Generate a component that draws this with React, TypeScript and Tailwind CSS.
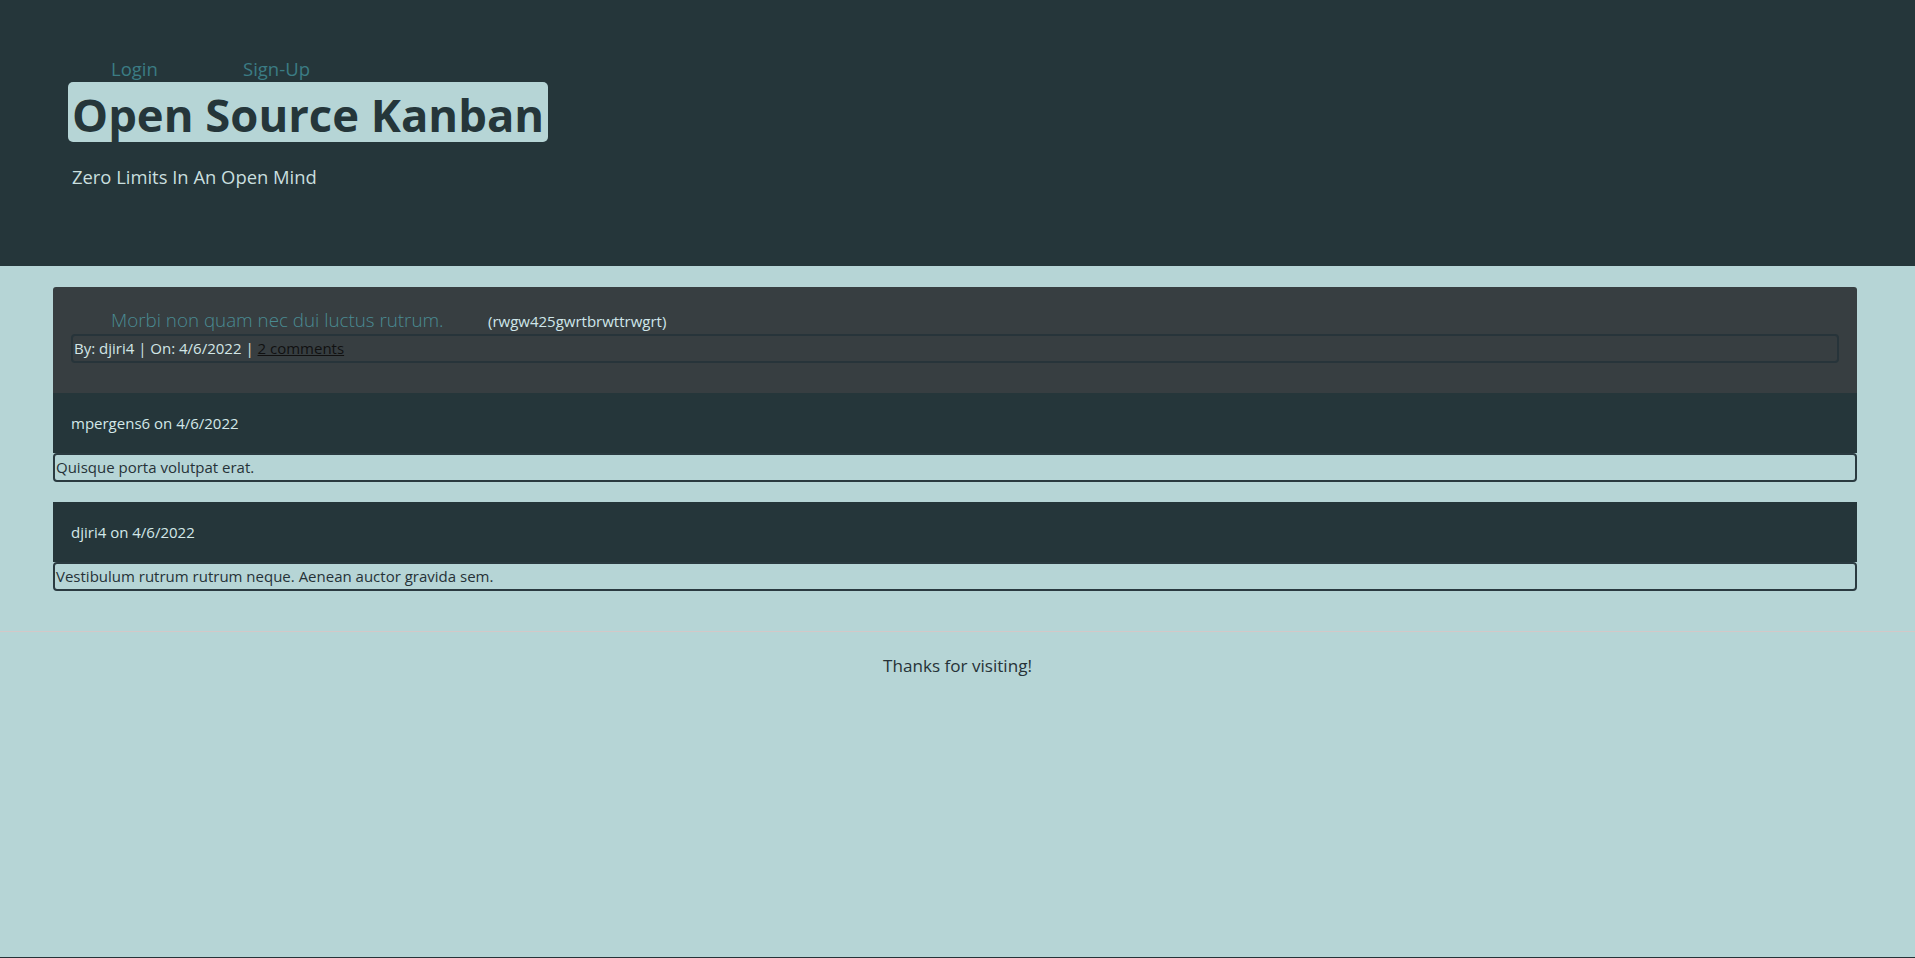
export default function App() {
  const comments = [
    { author: "mpergens6", date: "4/6/2022", body: "Quisque porta volutpat erat." },
    { author: "djiri4", date: "4/6/2022", body: "Vestibulum rutrum rutrum neque. Aenean auctor gravida sem." },
  ];

  return (
    <div className="min-h-screen flex flex-col bg-[#b6d5d6] border-b border-[#263238] font-['Open_Sans',sans-serif]">
      {/* Header */}
      <header className="h-[266px] bg-[#25363a] pl-[68px] pt-[57px]">
        <nav className="flex pl-[43px] text-[18.5px] leading-[24px] text-[#3b7c84]">
          <a href="#" className="w-[132px]">Login</a>
          <a href="#">Sign-Up</a>
        </nav>
        <h1 className="mt-[1px] inline-block h-[60px] rounded-[5px] bg-[#b6d5d6] px-[4px] pt-[4px] text-[45.4px] font-bold leading-[56px] text-[#25363a]">
          Open Source Kanban
        </h1>
        <p className="mt-[22px] pl-[4px] text-[18.4px] leading-[26px] text-[#c9dfdf]">
          Zero Limits In An Open Mind
        </p>
      </header>

      <main className="pt-[21px] ml-[53px] mr-[58px]">
        {/* Post */}
        <div className="rounded-t-[3px] bg-[#373e41] pt-[19px] pb-[30px]">
          <div className="flex items-baseline h-[28px] pl-[58px]">
            <h2 className="w-[377px] text-[18.8px] font-light leading-[28px] text-[#4a8b92]">
              Morbi non quam nec dui luctus rutrum.
            </h2>
            <span className="text-[15px] text-[#cfe6ea]">(rwgw425gwrtbrwttrwgrt)</span>
          </div>
          <div className="mx-[18px] rounded-[4px] border-2 border-[#27343a] pl-[1px] text-[15px] leading-[25px] text-[#d3e6e6]">
            By: djiri4 | On: 4/6/2022 |{" "}
            <a href="#" className="text-[#111] underline">2 comments</a>
          </div>
        </div>

        {/* Comments */}
        {comments.map((c, i) => (
          <div key={i} className={i > 0 ? "mt-[20px]" : ""}>
            <div className="bg-[#25363a] pl-[18px] py-[18px] text-[15px] leading-[24px] text-[#d3e8e8]">
              {c.author} on {c.date}
            </div>
            <div className="rounded-[4px] border-2 border-[#2a3a40] pl-[1px] text-[15px] leading-[25px] text-[#263238]">
              {c.body}
            </div>
          </div>
        ))}
      </main>

      <footer className="mt-[40px] border-t border-[#d3c8c8] pt-[20px] text-center text-[17.1px] leading-[28px] text-[#263238]">
        Thanks for visiting!
      </footer>
    </div>
  );
}
